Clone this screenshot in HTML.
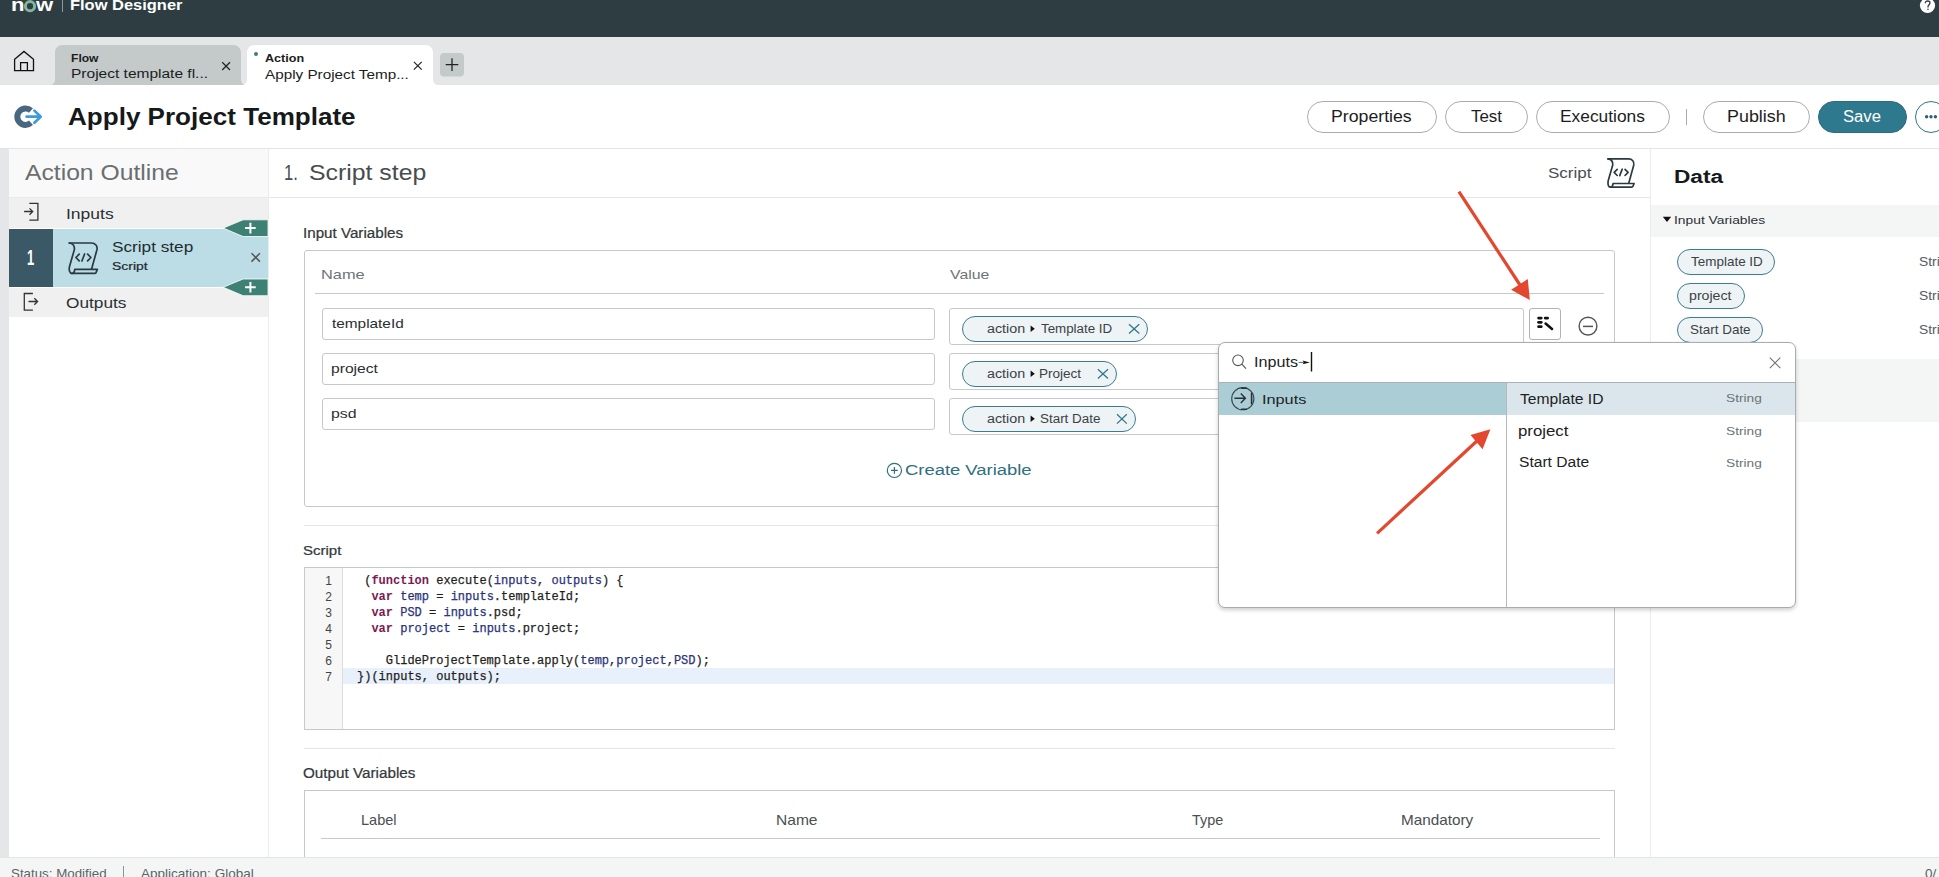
<!DOCTYPE html>
<html><head><meta charset="utf-8">
<style>
html,body{margin:0;padding:0;width:1939px;height:877px;overflow:hidden;background:#fff;position:relative;font-family:"Liberation Sans",sans-serif}
.a{position:absolute;box-sizing:border-box}
.t{position:absolute;line-height:1;white-space:pre;transform-origin:0 0}
svg{position:absolute;overflow:visible}
.k{font-weight:700;color:#7a1a55;-webkit-text-stroke:0}
.v{font-style:normal;color:#2d3db0}
</style></head><body>
<!-- top bar -->
<div class="a" style="left:0;top:0;width:1939px;height:37px;background:#2e3d41"></div>
<!-- tab bar -->
<div class="a" style="left:0;top:37px;width:1939px;height:48px;background:#e4e6e7"></div>
<!-- header -->
<div class="a" style="left:0;top:148px;width:1939px;height:1px;background:#e2e4e5"></div>
<!-- left strip -->
<div class="a" style="left:0;top:149px;width:9px;height:708px;background:#e4e6e7"></div>
<!-- sidebar -->
<div class="a" style="left:9px;top:149px;width:259px;height:48px;background:#f9f9f9"></div>
<div class="a" style="left:9px;top:197px;width:259px;height:1px;background:#e9eaea"></div>
<div class="a" style="left:9px;top:198px;width:259px;height:31px;background:#f0f0f1"></div>
<div class="a" style="left:9px;top:229px;width:259px;height:58px;background:#bcdde5"></div>
<div class="a" style="left:9px;top:229px;width:44px;height:58px;background:#3a5865"></div>
<div class="a" style="left:9px;top:287px;width:259px;height:30px;background:#f0f0f1"></div>
<div class="a" style="left:9px;top:228px;width:259px;height:1px;background:#ffffff"></div>
<div class="a" style="left:9px;top:287px;width:259px;height:1px;background:#ffffff"></div>
<div class="a" style="left:268px;top:149px;width:1px;height:708px;background:#ebecec"></div>
<!-- main header line -->
<div class="a" style="left:269px;top:197px;width:1381px;height:1px;background:#e4e6e7"></div>
<!-- data panel border -->
<div class="a" style="left:1650px;top:149px;width:1px;height:708px;background:#ebecec"></div>
<div class="a" style="left:1651px;top:205px;width:288px;height:32px;background:#f4f6f6"></div>
<div class="a" style="left:1651px;top:359px;width:288px;height:63px;background:#f4f6f6"></div>
<!-- input variables box -->
<div class="a" style="left:304px;top:250px;width:1311px;height:257px;border:1px solid #c6c8c9;border-radius:3px"></div>
<div class="a" style="left:315px;top:293px;width:1289px;height:1px;background:#c6c8c9"></div>
<div class="a" style="left:322px;top:308px;width:613px;height:32px;border:1px solid #c6c8c9;border-radius:3px"></div>
<div class="a" style="left:322px;top:353px;width:613px;height:32px;border:1px solid #c6c8c9;border-radius:3px"></div>
<div class="a" style="left:322px;top:398px;width:613px;height:32px;border:1px solid #c6c8c9;border-radius:3px"></div>
<div class="a" style="left:949px;top:308px;width:575px;height:37px;border:1px solid #c6c8c9;border-radius:3px"></div>
<div class="a" style="left:949px;top:353px;width:575px;height:37px;border:1px solid #c6c8c9;border-radius:3px"></div>
<div class="a" style="left:949px;top:398px;width:575px;height:37px;border:1px solid #c6c8c9;border-radius:3px"></div>
<!-- pills -->
<div class="a" style="left:962px;top:316px;width:186px;height:26px;border:1px solid #3b7d90;border-radius:13px;background:#eef3f5"></div>
<div class="a" style="left:962px;top:361px;width:155px;height:26px;border:1px solid #3b7d90;border-radius:13px;background:#eef3f5"></div>
<div class="a" style="left:962px;top:406px;width:174px;height:26px;border:1px solid #3b7d90;border-radius:13px;background:#eef3f5"></div>
<!-- magic button -->
<div class="a" style="left:1529px;top:308px;width:32px;height:32px;border:1px solid #b0b3b4;border-radius:3px"></div>
<!-- separators -->
<div class="a" style="left:304px;top:525px;width:1311px;height:1px;background:#e4e6e7"></div>
<!-- code box -->
<div class="a" style="left:304px;top:567px;width:1311px;height:163px;border:1px solid #c6c8c9"></div>
<div class="a" style="left:305px;top:568px;width:38px;height:161px;background:#f7f7f7;border-right:1px solid #dddddd"></div>
<div class="a" style="left:343px;top:668px;width:1271px;height:16px;background:#e8f0fb"></div>
<div class="a" style="left:357px;top:572.5px;font:12px/16px 'Liberation Mono',monospace;color:#1f1f1f;white-space:pre;-webkit-text-stroke:0.25px #1f1f1f"><div> (<b class="k">function</b> execute(<i class="v">inputs</i>, <i class="v">outputs</i>) {</div><div>  <b class="k">var</b> <i class="v">temp</i> = <i class="v">inputs</i>.templateId;</div><div>  <b class="k">var</b> <i class="v">PSD</i> = <i class="v">inputs</i>.psd;</div><div>  <b class="k">var</b> <i class="v">project</i> = <i class="v">inputs</i>.project;</div><div> </div><div>    GlideProjectTemplate.apply(<i class="v">temp</i>,<i class="v">project</i>,<i class="v">PSD</i>);</div><div>})(inputs, outputs);</div></div>
<div class="a" style="left:305px;top:573px;width:27px;text-align:right;font:12px/16px 'Liberation Sans',sans-serif;color:#444">1<br>2<br>3<br>4<br>5<br>6<br>7</div>
<div class="a" style="left:304px;top:748px;width:1311px;height:1px;background:#e4e6e7"></div>
<!-- output box -->
<div class="a" style="left:304px;top:790px;width:1311px;height:120px;border:1px solid #c6c8c9"></div>
<div class="a" style="left:321px;top:838px;width:1279px;height:1px;background:#c6c8c9"></div>
<!-- status bar -->
<div class="a" style="left:0;top:857px;width:1939px;height:20px;background:#f4f6f6;border-top:1px solid #e2e4e5"></div>
<div class="a" style="left:123px;top:866px;width:1px;height:11px;background:#8d9396"></div>
<!-- header buttons -->
<div class="a" style="left:1307px;top:101px;width:130px;height:32px;border:1px solid #a9acad;border-radius:16px"></div>
<div class="a" style="left:1445px;top:101px;width:83px;height:32px;border:1px solid #a9acad;border-radius:16px"></div>
<div class="a" style="left:1536px;top:101px;width:134px;height:32px;border:1px solid #a9acad;border-radius:16px"></div>
<div class="a" style="left:1686px;top:109px;width:1px;height:16px;background:#a9acad"></div>
<div class="a" style="left:1703px;top:101px;width:107px;height:32px;border:1px solid #a9acad;border-radius:16px"></div>
<div class="a" style="left:1818px;top:101px;width:89px;height:32px;border-radius:16px;background:#2f798e;border:1px solid #2a6d80"></div>
<div class="a" style="left:1915px;top:101px;width:32px;height:32px;border:1px solid #2e7590;border-radius:16px"></div>

<!-- icons layer 1 -->
<svg width="1939" height="877" style="left:0;top:0" viewBox="0 0 1939 877">
 <!-- now logo -->
 <circle cx="30" cy="6.2" r="4.6" fill="none" stroke="#81b5a0" stroke-width="3"/>
 <rect x="62" y="0" width="1" height="12" fill="#8d989b"/>
 <!-- help -->
 <circle cx="1927.5" cy="5.5" r="7.6" fill="#fff"/>
 <path d="M1925.3,3.2 C1925.3,1.6 1926.3,1 1927.6,1 C1929,1 1930,1.9 1930,3.1 C1930,4.6 1928,5 1928,6.8 V7.4" fill="none" stroke="#2f3c41" stroke-width="1.3"/>
 <circle cx="1928" cy="9.2" r="0.8" fill="#2f3c41"/>
 <!-- tabs -->
 <path d="M49,85 C53,85 55,83 55,79 V53 C55,48.5 58,45 63,45 H233 C238,45 241,48.5 241,53 V79 C241,83 243,85 247,85 Z" fill="#c4c9ca"/>
 <path d="M241,85 C245,85 247,83 247,79 V53 C247,48.5 250,45 255,45 H425 C430,45 433,48.5 433,53 V79 C433,83 435,85 439,85 Z" fill="#ffffff"/>
 <rect x="440" y="53" width="24" height="23.5" rx="4" fill="#c4c9ca"/>
 <path d="M452,58.3 V71 M445.7,64.7 H458.3" stroke="#222" stroke-width="1.3"/>
 <path d="M222.2,62.3 L230,70 M230,62.3 L222.2,70" stroke="#222" stroke-width="1.2"/>
 <path d="M413.9,61.9 L421.7,69.7 M421.7,61.9 L413.9,69.7" stroke="#222" stroke-width="1.2"/>
 <circle cx="256" cy="54" r="2" fill="#3d7f6f"/>
 <!-- home -->
 <path d="M14.6,70.6 V59.3 L24,51.4 L33.5,59.3 V70.6 Z M20.6,70.6 V62.6 H27.4 V70.6" fill="none" stroke="#111" stroke-width="1.3" stroke-linejoin="miter"/>
 <!-- header icon -->
 <path d="M31.0,110.6 A8.2,8.2 0 1 0 31.0,122.8" fill="none" stroke="#4a6780" stroke-width="6"/>
 <path d="M26.6,116.7 H40.5 M34.4,110.6 L40.7,116.7 L34.4,122.8" fill="none" stroke="#3c9bd8" stroke-width="2.7" stroke-linecap="round" stroke-linejoin="round"/>
 <!-- more dots -->
 <circle cx="1926.6" cy="116.8" r="1.7" fill="#2e6272"/>
 <circle cx="1931" cy="116.8" r="1.7" fill="#2e6272"/>
 <circle cx="1935.4" cy="116.8" r="1.7" fill="#2e6272"/>
 <!-- sidebar icons -->
 <path d="M29.3,203.4 H37.9 V220.2 H29.3 M24.1,211.5 H32.6 M29.5,208.4 L32.7,211.5 L29.5,214.7" fill="none" stroke="#333" stroke-width="1.3"/>
 <path d="M32.9,293.5 H24.3 V310.1 H32.9 M28.5,301.5 H37.6 M34.3,298.3 L37.6,301.5 L34.3,304.8" fill="none" stroke="#333" stroke-width="1.3"/>
 <g transform="translate(68,242)" fill="none" stroke="#2b3940" stroke-width="1.7" stroke-linejoin="round" stroke-linecap="round">
  <path d="M1.3,1 H23.4 C27.5,1 29.6,4 29,7.5 L23.6,27.1"/>
  <path d="M1.3,1 C4.5,1.5 6.8,3.5 6.4,7.5 L1.5,24.5 C0.8,28 1.5,31.4 4,31.4"/>
  <path d="M6.8,27.4 H29.4 L28.2,30.2 C28,31 27,31.4 26.5,31.4 H4 C5.5,31.4 6.5,29.5 6.8,27.4 Z"/>
  <path d="M11.2,12.2 L7.9,15.5 L11.2,18.8 M16.6,12 L13.9,19 M19.6,12.2 L22.9,15.5 L19.6,18.8"/>
 </g>
 <path d="M223.2,228.1 L243.1,219.8 H268 V236.5 H243.1 Z" fill="#3d8074" stroke="#fff" stroke-width="0.8"/>
 <path d="M223.2,287.3 L243.1,279 H268 V295.7 H243.1 Z" fill="#3d8074" stroke="#fff" stroke-width="0.8"/>
 <path d="M250.4,222.8 V233.4 M245.1,228.1 H255.7 M250.4,282 V292.6 M245.1,287.3 H255.7" stroke="#fff" stroke-width="2"/>
 <path d="M251.5,253.2 L259.9,261.6 M259.9,253.2 L251.5,261.6" stroke="#555" stroke-width="1.5"/>
 <!-- main header script icon -->
 <g transform="translate(1606.8,158) scale(0.93,0.93)" fill="none" stroke="#2b3940" stroke-width="1.8" stroke-linejoin="round" stroke-linecap="round">
  <path d="M1.3,1 H23.4 C27.5,1 29.6,4 29,7.5 L23.6,27.1"/>
  <path d="M1.3,1 C4.5,1.5 6.8,3.5 6.4,7.5 L1.5,24.5 C0.8,28 1.5,31.4 4,31.4"/>
  <path d="M6.8,27.4 H29.4 L28.2,30.2 C28,31 27,31.4 26.5,31.4 H4 C5.5,31.4 6.5,29.5 6.8,27.4 Z"/>
  <path d="M11.2,12.2 L7.9,15.5 L11.2,18.8 M16.6,12 L13.9,19 M19.6,12.2 L22.9,15.5 L19.6,18.8"/>
 </g>
 <!-- pill triangles and X -->
 <path d="M1030.6,325.5 L1034.8,328.8 L1030.6,332 Z M1030.6,370.5 L1034.8,373.8 L1030.6,377 Z M1030.6,415.5 L1034.8,418.8 L1030.6,422 Z" fill="#111"/>
 <path d="M1129,324.3 L1139.3,333.6 M1139.3,324.3 L1129,333.6 M1097.9,369.3 L1108,378.6 M1108,369.3 L1097.9,378.6 M1117,414.3 L1126.8,423.6 M1126.8,414.3 L1117,423.6" stroke="#2f7a8f" stroke-width="1.3"/>
 <!-- magic wand -->
 <g fill="#111">
  <rect x="1537.2" y="316.7" width="5.4" height="2.7" rx="1.35"/>
  <rect x="1543.8" y="316.7" width="5.2" height="2.7" rx="1.35"/>
  <rect x="1537.2" y="321" width="5.4" height="2.7" rx="1.35"/>
  <rect x="1537.2" y="325.3" width="5.4" height="2.7" rx="1.35"/>
 </g>
 <path d="M1545.6,323.6 L1552,328.9" stroke="#111" stroke-width="2.6" stroke-linecap="round"/>
 <!-- minus circle -->
 <circle cx="1588" cy="326.1" r="8.9" fill="none" stroke="#555" stroke-width="1.4"/>
 <path d="M1583,326.4 H1593" stroke="#555" stroke-width="1.5"/>
 <!-- create variable -->
 <circle cx="894.4" cy="470.4" r="7.1" fill="none" stroke="#2e6f80" stroke-width="1.2"/>
 <path d="M894.4,467 V473.8 M891,470.4 H897.8" stroke="#2e6f80" stroke-width="1.2"/>
 <!-- data triangle -->
 <path d="M1662.8,216.8 H1671.2 L1667,222.1 Z" fill="#111"/>
 <!-- data pills -->
 <rect x="1677.5" y="249.5" width="97" height="25" rx="12.5" fill="#eef3f5" stroke="#3b7d90" stroke-width="1"/>
 <rect x="1677.5" y="283.5" width="67" height="25" rx="12.5" fill="#eef3f5" stroke="#3b7d90" stroke-width="1"/>
 <rect x="1677.5" y="317.5" width="85" height="25" rx="12.5" fill="#eef3f5" stroke="#3b7d90" stroke-width="1"/>
</svg>

<div class="t" style="left:69.70px;top:-2.65px;font-size:15.00px;font-weight:700;color:#ffffff;transform:scaleX(1.0971);">Flow Designer</div>
<div class="t" style="left:10.70px;top:-4.34px;font-size:18.40px;font-weight:700;color:#ffffff;transform:scaleX(1.2000);">n</div>
<div class="t" style="left:36.30px;top:-4.34px;font-size:18.40px;font-weight:700;color:#ffffff;transform:scaleX(1.2000);">w</div>
<div class="t" style="left:1925.40px;top:867.73px;font-size:12.08px;font-weight:400;color:#5c6366;transform:scaleX(1.1200);">0/</div>
<div class="t" style="left:71.40px;top:54.14px;font-size:10.07px;font-weight:700;color:#1d1d1d;transform:scaleX(1.2000);">Flow</div>
<div class="t" style="left:71.40px;top:68.25px;font-size:12.89px;font-weight:400;color:#1d1d1d;transform:scaleX(1.2045);">Project template fl...</div>
<div class="t" style="left:264.80px;top:54.20px;font-size:10.47px;font-weight:700;color:#1d1d1d;transform:scaleX(1.2000);">Action</div>
<div class="t" style="left:264.50px;top:67.68px;font-size:13.56px;font-weight:400;color:#1d1d1d;transform:scaleX(1.1260);">Apply Project Temp...</div>
<div class="t" style="left:68.48px;top:106.26px;font-size:23.22px;font-weight:700;color:#16191a;transform:scaleX(1.1220);">Apply Project Template</div>
<div class="t" style="left:1330.88px;top:109.14px;font-size:15.84px;font-weight:400;color:#1d1d1d;transform:scaleX(1.1183);">Properties</div>
<div class="t" style="left:1471.00px;top:109.14px;font-size:15.84px;font-weight:400;color:#1d1d1d;transform:scaleX(1.0690);">Test</div>
<div class="t" style="left:1560.40px;top:109.14px;font-size:15.84px;font-weight:400;color:#1d1d1d;transform:scaleX(1.0961);">Executions</div>
<div class="t" style="left:1727.37px;top:109.14px;font-size:15.84px;font-weight:400;color:#1d1d1d;transform:scaleX(1.1300);">Publish</div>
<div class="t" style="left:1843.15px;top:109.14px;font-size:15.84px;font-weight:400;color:#ffffff;transform:scaleX(1.0514);">Save</div>
<div class="t" style="left:25.00px;top:162.47px;font-size:21.21px;font-weight:400;color:#6b6e70;transform:scaleX(1.1641);">Action Outline</div>
<div class="t" style="left:66.13px;top:206.22px;font-size:15.03px;font-weight:400;color:#2b2f31;transform:scaleX(1.1650);">Inputs</div>
<div class="t" style="left:27.09px;top:246.57px;font-size:21.21px;font-weight:700;color:#ffffff;transform:scaleX(0.6100);">1</div>
<div class="t" style="left:112.16px;top:241.15px;font-size:13.83px;font-weight:400;color:#1f2b30;transform:scaleX(1.2437);">Script step</div>
<div class="t" style="left:112.13px;top:261.34px;font-size:11.01px;font-weight:400;color:#1f2b30;transform:scaleX(1.2667);-webkit-text-stroke:0.22px #1f2b30;">Script</div>
<div class="t" style="left:66.10px;top:296.49px;font-size:14.36px;font-weight:400;color:#2b2f31;transform:scaleX(1.2020);">Outputs</div>
<div class="t" style="left:283.54px;top:163.06px;font-size:21.34px;font-weight:400;color:#484c4e;transform:scaleX(0.7786);">1.</div>
<div class="t" style="left:309.04px;top:163.06px;font-size:21.34px;font-weight:400;color:#484c4e;transform:scaleX(1.1636);">Script step</div>
<div class="t" style="left:1548.46px;top:165.54px;font-size:14.90px;font-weight:400;color:#4a4e50;transform:scaleX(1.1432);">Script</div>
<div class="t" style="left:303.10px;top:226.95px;font-size:13.83px;font-weight:400;color:#33383a;transform:scaleX(1.0967);-webkit-text-stroke:0.22px #33383a;">Input Variables</div>
<div class="t" style="left:321.08px;top:268.09px;font-size:13.42px;font-weight:400;color:#6e7478;transform:scaleX(1.2206);">Name</div>
<div class="t" style="left:949.50px;top:268.09px;font-size:13.42px;font-weight:400;color:#6e7478;transform:scaleX(1.1818);">Value</div>
<div class="t" style="left:332.30px;top:317.19px;font-size:13.42px;font-weight:400;color:#2a2e30;transform:scaleX(1.1452);">templateId</div>
<div class="t" style="left:331.13px;top:361.89px;font-size:13.42px;font-weight:400;color:#2a2e30;transform:scaleX(1.1667);">project</div>
<div class="t" style="left:331.12px;top:406.89px;font-size:13.42px;font-weight:400;color:#2a2e30;transform:scaleX(1.1850);">psd</div>
<div class="t" style="left:986.70px;top:322.82px;font-size:12.21px;font-weight:400;color:#3b4245;transform:scaleX(1.1719);">action</div>
<div class="t" style="left:1041.00px;top:322.82px;font-size:12.21px;font-weight:400;color:#3b4245;transform:scaleX(1.0923);">Template ID</div>
<div class="t" style="left:986.70px;top:367.82px;font-size:12.21px;font-weight:400;color:#3b4245;transform:scaleX(1.1719);">action</div>
<div class="t" style="left:1039.49px;top:367.82px;font-size:12.21px;font-weight:400;color:#3b4245;transform:scaleX(1.1081);">Project</div>
<div class="t" style="left:986.70px;top:412.82px;font-size:12.21px;font-weight:400;color:#3b4245;transform:scaleX(1.1719);">action</div>
<div class="t" style="left:1039.50px;top:412.82px;font-size:12.21px;font-weight:400;color:#3b4245;transform:scaleX(1.1000);">Start Date</div>
<div class="t" style="left:904.99px;top:462.21px;font-size:15.17px;font-weight:400;color:#2e6f80;transform:scaleX(1.2146);">Create Variable</div>
<div class="t" style="left:303.02px;top:544.66px;font-size:12.75px;font-weight:400;color:#33383a;transform:scaleX(1.1781);-webkit-text-stroke:0.22px #33383a;">Script</div>
<div class="t" style="left:303.18px;top:766.44px;font-size:14.90px;font-weight:400;color:#33383a;transform:scaleX(1.0241);-webkit-text-stroke:0.22px #33383a;">Output Variables</div>
<div class="t" style="left:361.10px;top:812.88px;font-size:14.50px;font-weight:400;color:#4a4f52;transform:scaleX(1.0029);">Label</div>
<div class="t" style="left:775.93px;top:812.88px;font-size:14.50px;font-weight:400;color:#4a4f52;transform:scaleX(1.0730);">Name</div>
<div class="t" style="left:1192.10px;top:812.88px;font-size:14.50px;font-weight:400;color:#4a4f52;transform:scaleX(0.9968);">Type</div>
<div class="t" style="left:1400.65px;top:812.88px;font-size:14.50px;font-weight:400;color:#4a4f52;transform:scaleX(1.0544);">Mandatory</div>
<div class="t" style="left:11.20px;top:867.73px;font-size:12.08px;font-weight:400;color:#5c6366;transform:scaleX(1.1035);">Status: Modified</div>
<div class="t" style="left:140.80px;top:867.73px;font-size:12.08px;font-weight:400;color:#5c6366;transform:scaleX(1.1190);">Application: Global</div>
<div class="t" style="left:1674.10px;top:168.31px;font-size:18.93px;font-weight:700;color:#16191a;transform:scaleX(1.1975);">Data</div>
<div class="t" style="left:1674.09px;top:215.40px;font-size:11.41px;font-weight:400;color:#2b2f31;transform:scaleX(1.2122);">Input Variables</div>
<div class="t" style="left:1690.60px;top:255.60px;font-size:12.35px;font-weight:400;color:#3b4245;transform:scaleX(1.0908);">Template ID</div>
<div class="t" style="left:1689.45px;top:289.80px;font-size:12.35px;font-weight:400;color:#3b4245;transform:scaleX(1.1472);">project</div>
<div class="t" style="left:1689.51px;top:324.00px;font-size:12.35px;font-weight:400;color:#3b4245;transform:scaleX(1.0907);">Start Date</div>
<div class="t" style="left:1919.38px;top:255.60px;font-size:12.35px;font-weight:400;color:#555b5e;transform:scaleX(1.1200);">Stri</div>
<div class="t" style="left:1919.38px;top:289.80px;font-size:12.35px;font-weight:400;color:#555b5e;transform:scaleX(1.1200);">Stri</div>
<div class="t" style="left:1919.38px;top:324.00px;font-size:12.35px;font-weight:400;color:#555b5e;transform:scaleX(1.1200);">Stri</div>

<!-- popup -->
<div class="a" style="left:1218px;top:342px;width:578px;height:266px;border:1px solid #a9acad;border-radius:7px;background:#fff;box-shadow:0 2px 4px rgba(0,0,0,0.2)"></div>
<div class="a" style="left:1219px;top:382px;width:288px;height:33px;background:#abcdd5"></div>
<div class="a" style="left:1507px;top:382px;width:288px;height:33px;background:#dae6eb"></div>
<div class="a" style="left:1219px;top:381.5px;width:576px;height:1px;background:#a9b4b8"></div>
<div class="a" style="left:1506px;top:382px;width:1px;height:225px;background:#b5b9bb"></div>
<svg width="1939" height="877" style="left:0;top:0" viewBox="0 0 1939 877">
 <circle cx="1238" cy="360.3" r="5.3" fill="none" stroke="#555" stroke-width="1.1"/>
 <path d="M1241.8,364.2 L1246,368.6" stroke="#555" stroke-width="1.2"/>
 <path d="M1769.8,357.7 L1780.3,368.2 M1780.3,357.7 L1769.8,368.2" stroke="#777" stroke-width="1.2"/>
 <rect x="1310.8" y="352" width="1.4" height="19.5" fill="#111"/>
 <path d="M1298.6,362.4 H1304" stroke="#444" stroke-width="0.8"/>
 <path d="M1302.5,360.6 L1309.8,362.4 L1302.5,364.2 L1304,362.4 Z" fill="#111"/>
 <circle cx="1242.8" cy="398.7" r="11.1" fill="none" stroke="#3a4448" stroke-width="1.1"/>
 <path d="M1234.4,398.3 H1245.3 M1240.8,393.6 L1245.4,398.3 L1240.8,403" fill="none" stroke="#2a3236" stroke-width="1.4"/>
 <path d="M1241.2,388.3 H1247 M1251.6,392.8 V404.3 M1241.2,409.2 H1247" fill="none" stroke="#2a3236" stroke-width="1.6"/>
</svg>
<div class="t" style="left:1254.13px;top:356.05px;font-size:13.83px;font-weight:400;color:#1d2225;transform:scaleX(1.1667);">Inputs</div>
<div class="t" style="left:1262.16px;top:393.22px;font-size:13.15px;font-weight:400;color:#1d2225;transform:scaleX(1.2382);">Inputs</div>
<div class="t" style="left:1519.80px;top:392.85px;font-size:13.83px;font-weight:400;color:#1d2225;transform:scaleX(1.1315);">Template ID</div>
<div class="t" style="left:1518.38px;top:424.65px;font-size:13.83px;font-weight:400;color:#1d2225;transform:scaleX(1.2150);">project</div>
<div class="t" style="left:1518.57px;top:456.45px;font-size:13.83px;font-weight:400;color:#1d2225;transform:scaleX(1.1279);">Start Date</div>
<div class="t" style="left:1725.60px;top:393.30px;font-size:11.41px;font-weight:400;color:#6b7377;transform:scaleX(1.2000);">String</div>
<div class="t" style="left:1725.60px;top:425.60px;font-size:11.41px;font-weight:400;color:#6b7377;transform:scaleX(1.2000);">String</div>
<div class="t" style="left:1725.60px;top:457.70px;font-size:11.41px;font-weight:400;color:#6b7377;transform:scaleX(1.2000);">String</div>

<svg width="1939" height="877" style="left:0;top:0" viewBox="0 0 1939 877">
 <path d="M1458.9,191.6 L1520,285" stroke="#e3472d" stroke-width="3.2"/>
 <path d="M1529.8,300.1 L1511.1,289.7 L1527.8,279 Z" fill="#e3472d"/>
 <path d="M1377.1,533.3 L1478,440" stroke="#e3472d" stroke-width="3.2"/>
 <path d="M1490.4,429.3 L1470.5,435 L1482.6,449.2 Z" fill="#e3472d"/>
</svg>
</body></html>
